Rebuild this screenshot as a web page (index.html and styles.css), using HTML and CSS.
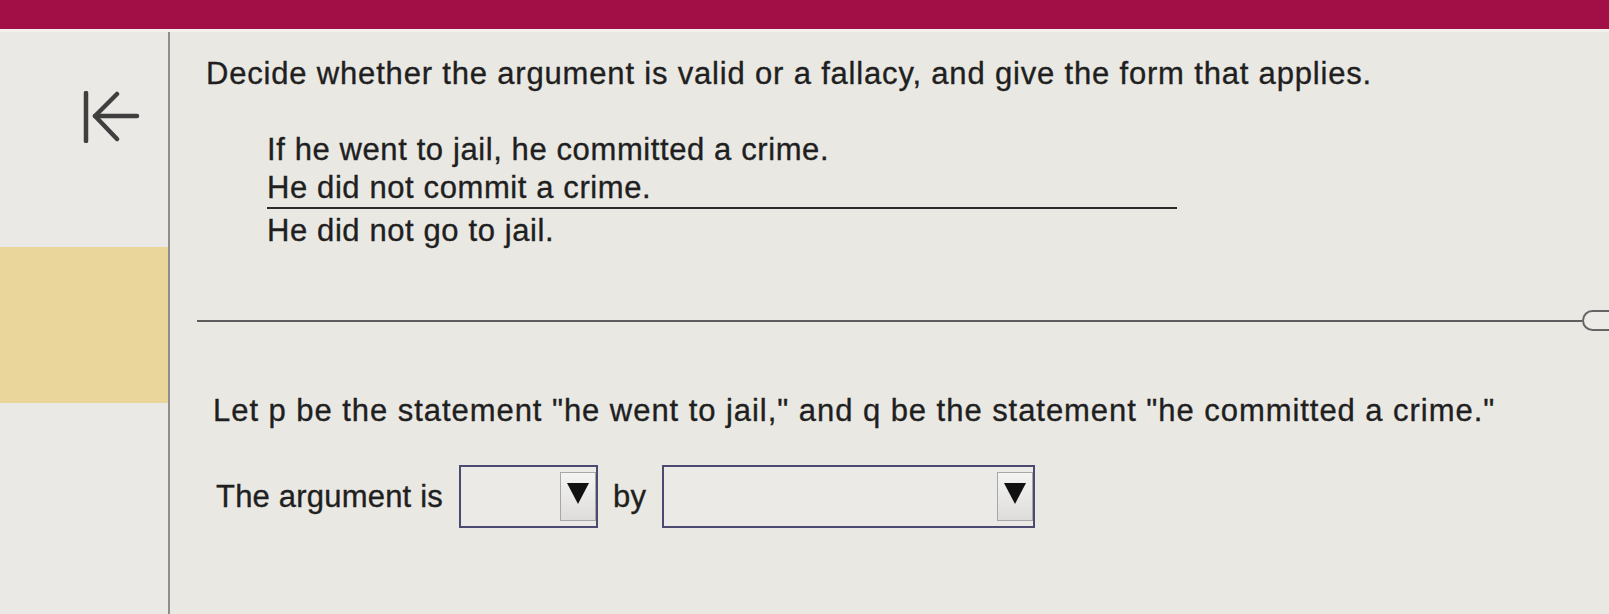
FILE: index.html
```html
<!DOCTYPE html>
<html lang="en">
<head>
<meta charset="utf-8">
<title>Argument form</title>
<link rel="stylesheet" href="styles.css">
</head>
<body>
<div class="topbar"></div>
<div class="main">
  <aside class="sidebar">
    <button class="back" aria-label="Back">
      <svg width="60" height="52" viewBox="0 0 60 52">
        <line x1="6" y1="2" x2="6" y2="50" stroke="#3f3f3f" stroke-width="4.5" stroke-linecap="round"/>
        <polyline points="37,3 15,25 37,48" fill="none" stroke="#3f3f3f" stroke-width="4.5" stroke-linecap="round" stroke-linejoin="round"/>
        <line x1="15" y1="25" x2="57" y2="25" stroke="#3f3f3f" stroke-width="4.5" stroke-linecap="round"/>
      </svg>
    </button>
    <div class="highlight"></div>
  </aside>
  <section class="content">
    <p class="prompt">Decide whether the argument is valid or a fallacy, and give the form that applies.</p>
    <div class="argument">
      <div class="premise">If he went to jail, he committed a crime.</div>
      <div class="premise last">He did not commit a crime.</div>
      <div class="conclusion">He did not go to jail.</div>
    </div>
    <div class="divider"><span class="rule"></span><span class="handle"></span></div>
    <p class="let">Let p be the statement "he went to jail," and q be the statement "he committed a crime."</p>
    <div class="answer">
      <span class="label">The argument is</span>
      <div class="select small"><span class="btn"><span class="tri"></span></span></div>
      <span class="label by">by</span>
      <div class="select wide"><span class="btn"><span class="tri"></span></span></div>
    </div>
  </section>
</div>
</body>
</html>
```

FILE: styles.css
```css
* { box-sizing: border-box; }
html, body {
  margin: 0;
  padding: 0;
}
body {
  width: 1609px;
  height: 614px;
  overflow: hidden;
  background: #e9e8e3;
  font-family: "Liberation Sans", Arial, sans-serif;
  color: #1f1f1f;
}
.topbar {
  height: 32px;
  background: #a20f47;
  border-bottom: 3px solid #f1f0ec;
}
.main {
  display: flex;
  height: 582px;
}
.sidebar {
  width: 170px;
  flex: none;
  background: #eae9e5;
  border-right: 2px solid #8e8e8e;
  display: flex;
  flex-direction: column;
  padding-top: 59px;
}
.back {
  margin-left: 80px;
  width: 60px;
  height: 52px;
  padding: 0;
  border: 0;
  background: transparent;
  display: block;
}
.back svg { display: block; }
.highlight {
  margin-top: 104px;
  height: 156px;
  background: #ead69b;
}
.content {
  flex: 1;
  min-width: 0;
  overflow: hidden;
  padding-left: 27px;
  font-size: 31px;
  line-height: 36px;
  letter-spacing: 0.6px;
  -webkit-text-stroke: 0.35px #1f1f1f;
}
.prompt {
  margin: 24px 0 0 0;
  padding-left: 9px;
  letter-spacing: 0.82px;
}
.argument {
  margin: 40px 0 0 70px;
  width: 910px;
}
.premise {
  height: 38px;
  line-height: 36px;
}
.premise.last {
  height: 39px;
  border-bottom: 2px solid #2a2a2a;
}
.conclusion {
  padding-top: 4px;
}
.divider {
  margin-top: 61px;
  height: 21px;
  display: flex;
  align-items: center;
}
.rule {
  flex: 1;
  height: 2px;
  background: #5e5e5e;
}
.handle {
  flex: none;
  width: 44px;
  height: 21px;
  border: 2px solid #656565;
  border-radius: 11px;
  background: #ecebe7;
  margin-right: -17px;
}
.let {
  margin: 62px 0 0 0;
  padding-left: 16px;
  letter-spacing: 0.95px;
}
.answer {
  margin-top: 36px;
  padding-left: 19px;
  display: flex;
  align-items: center;
  letter-spacing: 0.2px;
}
.label { white-space: nowrap; }
.select {
  height: 63px;
  border: 2px solid #4b4b72;
  background: #ebeae6;
  display: flex;
  justify-content: flex-end;
  align-items: center;
}
.select.small {
  width: 139px;
  margin-left: 16px;
}
.select.wide {
  width: 373px;
  margin-left: 16px;
}
.by { margin-left: 15px; }
.btn {
  width: 36px;
  height: 49px;
  border: 1px solid #a7a7a7;
  background: linear-gradient(#f4f4f2, #dedddb);
  display: flex;
  justify-content: center;
  padding-top: 10px;
}
.tri {
  width: 0;
  height: 0;
  border-left: 11px solid transparent;
  border-right: 11px solid transparent;
  border-top: 21px solid #111;
}
```
